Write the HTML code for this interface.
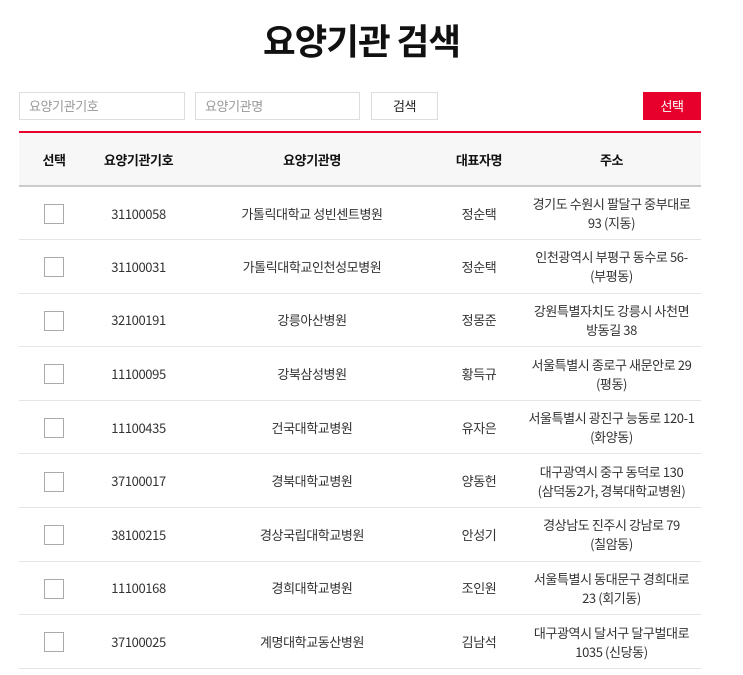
<!DOCTYPE html>
<html><head><meta charset="utf-8"><style>
*{box-sizing:border-box;margin:0;padding:0}
body{width:743px;height:675px;background:#fff;font-family:"Noto Sans CJK KR","Liberation Sans",sans-serif;color:#333;overflow:hidden;position:relative;letter-spacing:-0.4px}
h1{position:absolute;top:14px;left:-10px;width:743px;text-align:center;font-size:35.5px;font-weight:bold;color:#111;letter-spacing:-1px;line-height:52px}
.in{position:absolute;top:92px;height:28px;border:1px solid #ddd;font-size:13px;color:#999;padding:0 9px;line-height:26px}
.btn{position:absolute;top:92px;height:28px;border:1px solid #ddd;font-size:13px;color:#222;text-align:center;line-height:26px}
.red{position:absolute;top:92px;left:643px;width:58px;height:28px;background:#e8002d;color:#fff;font-size:13px;text-align:center;line-height:28px}
table{position:absolute;top:131px;left:19px;width:682px;border-collapse:collapse;border-top:2px solid #e8002d;font-size:13px}
th{background:#f7f7f7;height:54px;font-weight:bold;color:#111;border-bottom:2px solid #ccc}
td{height:53.6px;text-align:center;border-bottom:1px solid #e5e5e5;line-height:19px;color:#333}
.cb{display:inline-block;width:20px;height:20px;border:1px solid #aaa;vertical-align:middle}
</style></head><body>
<h1>요양기관 검색</h1>
<div class="in" style="left:19px;width:166px">요양기관기호</div>
<div class="in" style="left:195px;width:165px">요양기관명</div>
<div class="btn" style="left:371px;width:67px">검색</div>
<div class="red">선택</div>
<table>
<colgroup><col style="width:70px"><col style="width:99px"><col style="width:248px"><col style="width:86px"><col style="width:179px"></colgroup>
<tr><th>선택</th><th>요양기관기호</th><th>요양기관명</th><th>대표자명</th><th>주소</th></tr>
<tr><td><span class="cb"></span></td><td>31100058</td><td>가톨릭대학교 성빈센트병원</td><td>정순택</td><td>경기도 수원시 팔달구 중부대로<br>93 (지동)</td></tr>
<tr><td><span class="cb"></span></td><td>31100031</td><td>가톨릭대학교인천성모병원</td><td>정순택</td><td>인천광역시 부평구 동수로 56-<br>(부평동)</td></tr>
<tr><td><span class="cb"></span></td><td>32100191</td><td>강릉아산병원</td><td>정몽준</td><td>강원특별자치도 강릉시 사천면<br>방동길 38</td></tr>
<tr><td><span class="cb"></span></td><td>11100095</td><td>강북삼성병원</td><td>황득규</td><td>서울특별시 종로구 새문안로 29<br>(평동)</td></tr>
<tr><td><span class="cb"></span></td><td>11100435</td><td>건국대학교병원</td><td>유자은</td><td>서울특별시 광진구 능동로 120-1<br>(화양동)</td></tr>
<tr><td><span class="cb"></span></td><td>37100017</td><td>경북대학교병원</td><td>양동헌</td><td>대구광역시 중구 동덕로 130<br>(삼덕동2가, 경북대학교병원)</td></tr>
<tr><td><span class="cb"></span></td><td>38100215</td><td>경상국립대학교병원</td><td>안성기</td><td>경상남도 진주시 강남로 79<br>(칠암동)</td></tr>
<tr><td><span class="cb"></span></td><td>11100168</td><td>경희대학교병원</td><td>조인원</td><td>서울특별시 동대문구 경희대로<br>23 (회기동)</td></tr>
<tr><td><span class="cb"></span></td><td>37100025</td><td>계명대학교동산병원</td><td>김남석</td><td>대구광역시 달서구 달구벌대로<br>1035 (신당동)</td></tr>
</table>
</body></html>
